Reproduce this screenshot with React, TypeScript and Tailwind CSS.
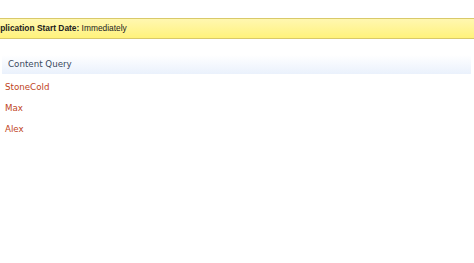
import React from 'react';

const items = ['StoneCold', 'Max', 'Alex'];

const App: React.FC = () => {
  return (
    <div className="w-[474px] h-[263px] bg-white overflow-hidden font-['DejaVu_Sans',sans-serif]">
      {/* status bar */}
      <div className="mt-[18px] h-[21px] border-y border-[#d9c96a] bg-gradient-to-b from-[#fff7b0] to-[#fff27a] flex items-center overflow-hidden">
        <div className="-ml-[11px] whitespace-nowrap font-['Liberation_Sans',sans-serif] text-[8.4px] text-[#222]">
          <span className="font-bold">Application Start Date:</span> Immediately
        </div>
      </div>

      {/* web part */}
      <div className="mt-[16px] mx-[2px] mr-[3px] h-[19px] bg-gradient-to-b from-white to-[#eaf1fc] flex items-center px-[6px]">
        <span className="text-[8.7px] text-[#3b4a5e]">Content Query</span>
      </div>
      <div className="flex flex-col pl-[5px] pt-[3px]">
        {items.map((name) => (
          <div key={name} className="h-[21px] flex items-center text-[8.7px] text-[#c0451c]">
            {name}
          </div>
        ))}
      </div>
    </div>
  );
};

export default App;
